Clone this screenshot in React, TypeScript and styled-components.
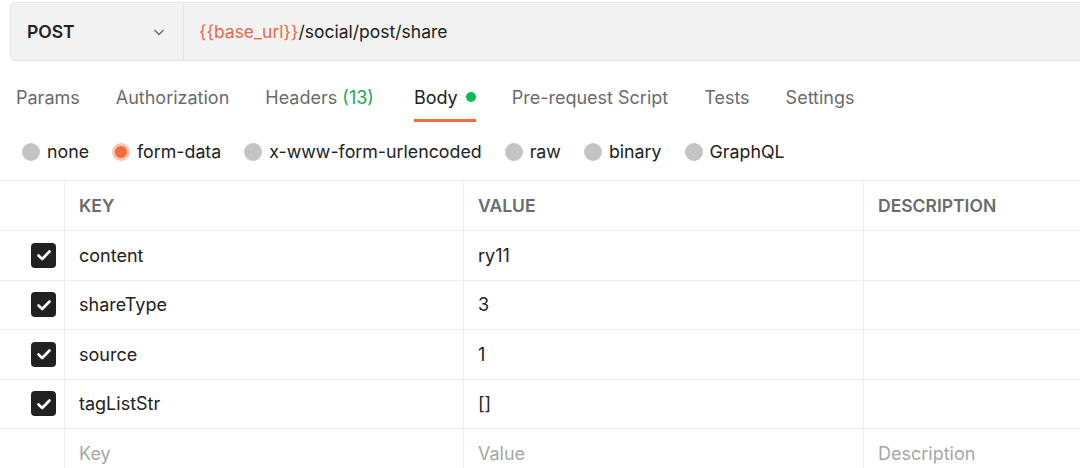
import * as React from 'react'
import styled, { createGlobalStyle } from 'styled-components'

const GlobalStyle = createGlobalStyle`
  html, body {
    margin: 0;
    padding: 0;
    background: #ffffff;
    font-family: Inter, "Noto Sans", sans-serif;
    color: #212121;
  }
`

const Page = styled.div`
  width: 1080px;
  height: 468px;
  overflow: hidden;
  padding-top: 2px;
  box-sizing: border-box;
`

const UrlBar = styled.div`
  display: flex;
  height: 59px;
  margin-left: 10px;
  width: 1080px;
  background: #f2f2f2;
  border: 1px solid #e3e3e3;
  border-radius: 5px 0 0 5px;
  box-sizing: border-box;
`

const MethodSelect = styled.div`
  display: flex;
  align-items: center;
  justify-content: space-between;
  width: 173px;
  padding: 0 17px 0 16px;
  box-sizing: border-box;
  border-right: 1px solid #e3e3e3;
  font-size: 17.5px;
  font-weight: 600;
  color: #212121;
`

const UrlText = styled.div`
  display: flex;
  align-items: center;
  padding-left: 15px;
  font-size: 17.5px;
  color: #212121;
`

const Variable = styled.span`
  color: #e8684a;
`

const Tabs = styled.div`
  display: flex;
  height: 61px;
  padding-left: 16px;
  gap: 36px;
`

const Tab = styled.div<{ $active?: boolean }>`
  display: flex;
  align-items: center;
  gap: 8px;
  font-size: 18px;
  color: ${(p) => (p.$active ? '#212121' : '#6b6b6b')};
  border-bottom: 3px solid ${(p) => (p.$active ? '#f26b3a' : 'transparent')};
  box-sizing: border-box;
  padding-top: 14px;
  margin-left: ${(p) => (p.$active ? '4px' : '0')};
`

const Count = styled.span`
  color: #26a65b;
`

const Dot = styled.span`
  width: 10px;
  height: 10px;
  border-radius: 50%;
  background: #0cbb52;
`

const Radios = styled.div`
  display: flex;
  align-items: center;
  height: 58px;
  padding-left: 22px;
  gap: 23px;
  border-bottom: 1px solid #ededed;
`

const RadioItem = styled.label`
  display: flex;
  align-items: center;
  gap: 7px;
  font-size: 17.8px;
  color: #212121;
  padding-top: 1px;
`

const RadioCircle = styled.span<{ $checked?: boolean }>`
  width: 18px;
  height: 18px;
  border-radius: 50%;
  box-sizing: border-box;
  background: ${(p) => (p.$checked ? '#f26b3a' : '#c4c4c4')};
  border: ${(p) => (p.$checked ? '3px solid #f7c2ae' : 'none')};
`

const Table = styled.div`
  display: grid;
  grid-template-columns: 65px 399px 400px 1fr;
`

const Cell = styled.div<{ $head?: boolean; $last?: boolean }>`
  display: flex;
  align-items: center;
  height: ${(p) => (p.$head ? '50px' : '49.5px')};
  box-sizing: border-box;
  padding-left: 14px;
  border-bottom: 1px solid #ededed;
  border-right: ${(p) => (p.$last ? 'none' : '1px solid #ededed')};
  font-size: ${(p) => (p.$head ? '17.5px' : '18px')};
  font-weight: ${(p) => (p.$head ? 600 : 400)};
  color: ${(p) => (p.$head ? '#6b6b6b' : '#212121')};
`

const CheckCell = styled(Cell)`
  justify-content: flex-end;
  padding-left: 0;
  padding-right: 8px;
`

const Placeholder = styled.span`
  color: #a6a6a6;
`

const Checkbox = styled.span`
  display: flex;
  align-items: center;
  justify-content: center;
  width: 25px;
  height: 25px;
  border-radius: 4px;
  background: #212121;
`

const ChevronDown = () => (
  <svg width="14" height="14" viewBox="0 0 14 14" fill="none">
    <path d="M2.5 5 L7 9.5 L11.5 5" stroke="#6b6b6b" strokeWidth="1.4" />
  </svg>
)

const CheckMark = () => (
  <svg width="16" height="16" viewBox="0 0 16 16" fill="none">
    <path d="M2.5 8.5 L6.2 12 L13.5 4.5" stroke="#ffffff" strokeWidth="2.6" strokeLinecap="round" strokeLinejoin="round" />
  </svg>
)

const tabs = ['Params', 'Authorization', 'Headers', 'Body', 'Pre-request Script', 'Tests', 'Settings']
const bodyTypes = ['none', 'form-data', 'x-www-form-urlencoded', 'raw', 'binary', 'GraphQL']
const rows = [
  { key: 'content', value: 'ry11' },
  { key: 'shareType', value: '3' },
  { key: 'source', value: '1' },
  { key: 'tagListStr', value: '[]' },
]

export default function App() {
  return (
    <Page>
      <GlobalStyle />
      <UrlBar>
        <MethodSelect>
          POST
          <ChevronDown />
        </MethodSelect>
        <UrlText>
          <Variable>{'{{base_url}}'}</Variable>/social/post/share
        </UrlText>
      </UrlBar>

      <Tabs>
        {tabs.map((t) => (
          <Tab key={t} $active={t === 'Body'}>
            {t === 'Headers' ? (
              <span>
                Headers <Count>(13)</Count>
              </span>
            ) : (
              t
            )}
            {t === 'Body' && <Dot />}
          </Tab>
        ))}
      </Tabs>

      <Radios>
        {bodyTypes.map((b) => (
          <RadioItem key={b}>
            <RadioCircle $checked={b === 'form-data'} />
            {b}
          </RadioItem>
        ))}
      </Radios>

      <Table>
        <CheckCell $head />
        <Cell $head>KEY</Cell>
        <Cell $head>VALUE</Cell>
        <Cell $head $last>DESCRIPTION</Cell>
        {rows.map((r) => (
          <React.Fragment key={r.key}>
            <CheckCell>
              <Checkbox>
                <CheckMark />
              </Checkbox>
            </CheckCell>
            <Cell>{r.key}</Cell>
            <Cell>{r.value}</Cell>
            <Cell $last />
          </React.Fragment>
        ))}
        <CheckCell />
        <Cell>
          <Placeholder>Key</Placeholder>
        </Cell>
        <Cell>
          <Placeholder>Value</Placeholder>
        </Cell>
        <Cell $last>
          <Placeholder>Description</Placeholder>
        </Cell>
      </Table>
    </Page>
  )
}
